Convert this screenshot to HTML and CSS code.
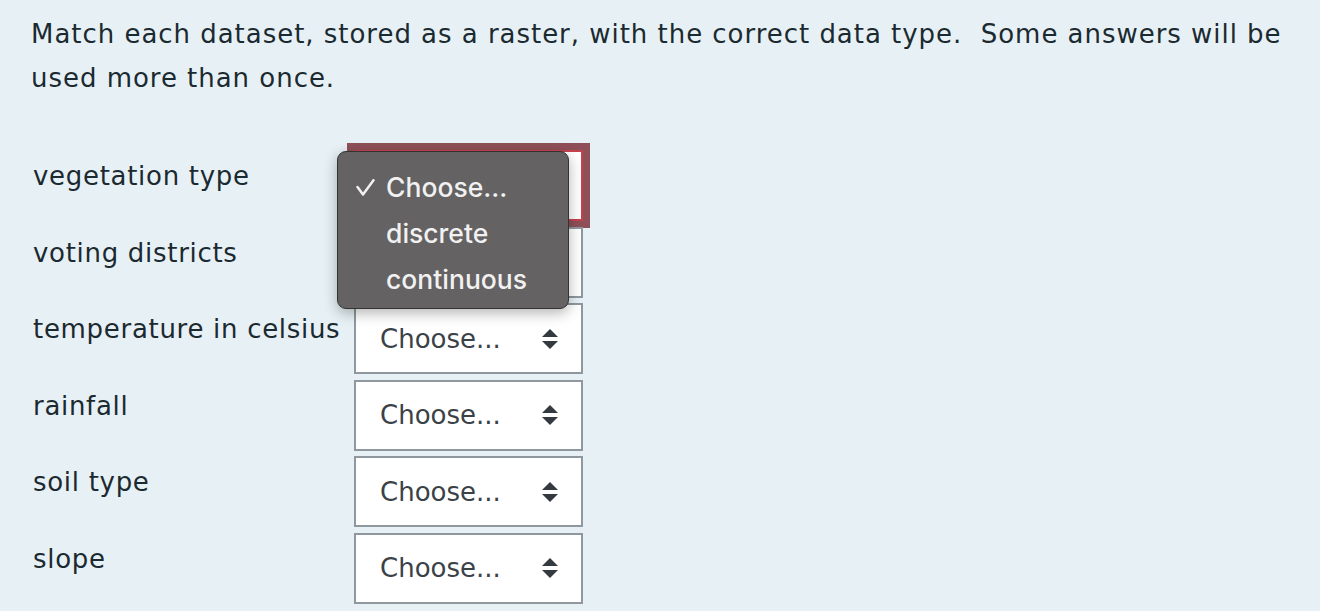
FILE: index.html
```html
<!DOCTYPE html>
<html>
<head>
  <title>Raster data types</title>
  <link rel="stylesheet" href="styles.css">
</head>
<body>
  <div class="question">
    <p class="prompt">Match each dataset, stored as a raster, with the correct data type.&nbsp; Some answers will be used more than once.</p>

    <div class="rows">
      <div class="row">
        <div class="label">vegetation type</div>
        <div class="field">
          <div class="select focused">
            <span>Choose...</span>
            <svg class="arrows" width="16" height="20" viewBox="0 0 16 20"><path d="M8 0 L16 8 H0 Z M8 20 L16 12 H0 Z" fill="#343a3f"/></svg>
          </div>
          <ul class="popup">
            <li><svg class="check" width="19" height="17" viewBox="0 0 19 17"><path d="M1.5 8 L7 15.5 L17.5 1.2" fill="none" stroke="#f1f1f1" stroke-width="2.5" stroke-linecap="round" stroke-linejoin="round"/></svg>Choose...</li>
            <li>discrete</li>
            <li>continuous</li>
          </ul>
        </div>
      </div>
      <div class="row">
        <div class="label">voting districts</div>
        <div class="field">
          <div class="select">
            <span>Choose...</span>
            <svg class="arrows" width="16" height="20" viewBox="0 0 16 20"><path d="M8 0 L16 8 H0 Z M8 20 L16 12 H0 Z" fill="#343a3f"/></svg>
          </div>
        </div>
      </div>
      <div class="row">
        <div class="label">temperature in celsius</div>
        <div class="field">
          <div class="select">
            <span>Choose...</span>
            <svg class="arrows" width="16" height="20" viewBox="0 0 16 20"><path d="M8 0 L16 8 H0 Z M8 20 L16 12 H0 Z" fill="#343a3f"/></svg>
          </div>
        </div>
      </div>
      <div class="row">
        <div class="label">rainfall</div>
        <div class="field">
          <div class="select">
            <span>Choose...</span>
            <svg class="arrows" width="16" height="20" viewBox="0 0 16 20"><path d="M8 0 L16 8 H0 Z M8 20 L16 12 H0 Z" fill="#343a3f"/></svg>
          </div>
        </div>
      </div>
      <div class="row">
        <div class="label">soil type</div>
        <div class="field">
          <div class="select">
            <span>Choose...</span>
            <svg class="arrows" width="16" height="20" viewBox="0 0 16 20"><path d="M8 0 L16 8 H0 Z M8 20 L16 12 H0 Z" fill="#343a3f"/></svg>
          </div>
        </div>
      </div>
      <div class="row">
        <div class="label">slope</div>
        <div class="field">
          <div class="select">
            <span>Choose...</span>
            <svg class="arrows" width="16" height="20" viewBox="0 0 16 20"><path d="M8 0 L16 8 H0 Z M8 20 L16 12 H0 Z" fill="#343a3f"/></svg>
          </div>
        </div>
      </div>
    </div>
  </div>
</body>
</html>
```

FILE: styles.css
```css
body {
  margin: 0;
  background: #e7f1f5;
  font-family: "DejaVu Sans", "Open Sans", sans-serif;
  color: #1b2a30;
}

.question {
  padding: 12px 20px 0 31px;
}

.prompt {
  margin: 0;
  font-size: 26px;
  line-height: 44px;
  letter-spacing: 0.97px;
}

.rows {
  margin-top: 50px;
  display: flex;
  flex-direction: column;
  gap: 5.5px;
}

.row {
  display: flex;
  height: 71px;
}

.label {
  width: 321px;
  padding-left: 2px;
  padding-top: 6px;
  font-size: 26px;
  line-height: 40px;
  letter-spacing: 0.7px;
}

.field {
  position: relative;
}

.select {
  box-sizing: border-box;
  width: 229px;
  height: 71px;
  background: #fff;
  border: 2px solid #8f989f;
  display: flex;
  align-items: center;
  justify-content: space-between;
  padding: 0 23px 0 24px;
  font-size: 26px;
  color: #3b4247;
}

.select.focused {
  border-color: #c4424e;
  box-shadow: 0 0 0 7px #8f4f58;
}

/* the open list covers the select's own text */
.select.focused span {
  visibility: hidden;
}

.popup {
  position: absolute;
  z-index: 10;
  left: -17px;
  top: 1px;
  width: 232px;
  height: 158px;
  box-sizing: border-box;
  margin: 0;
  padding: 13px 0 0 0;
  list-style: none;
  background: #646262;
  border: 1px solid #333;
  border-radius: 9px;
  box-shadow: 0 4px 14px rgba(0, 0, 0, 0.3);
  font-family: "Inter", "Liberation Sans", sans-serif;
  font-size: 26.5px;
  font-weight: 500;
  color: #f1f1f1;
}

.popup li {
  height: 46px;
  line-height: 44px;
  padding-left: 48px;
  position: relative;
}

.check {
  position: absolute;
  left: 18px;
  top: 14px;
}
```
